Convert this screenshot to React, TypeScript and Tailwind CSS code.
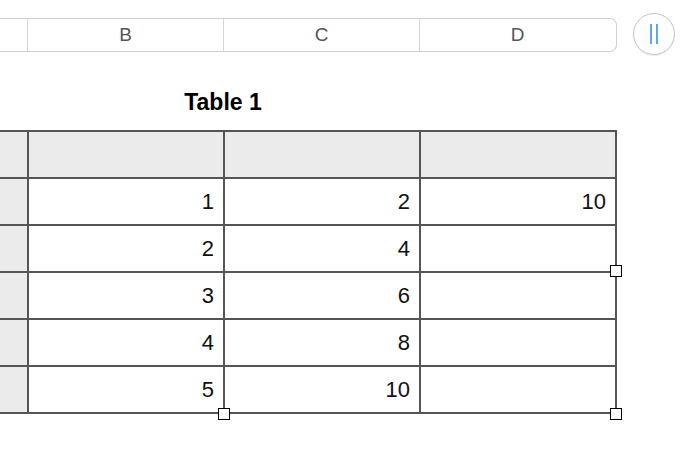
const rows: (string | number)[][] = [
  [1, 2, 10],
  [2, 4, ""],
  [3, 6, ""],
  [4, 8, ""],
  [5, 10, ""],
];

function Handle({ className }: { className: string }) {
  return <div className={`absolute w-[12px] h-[12px] bg-white border border-black ${className}`} />;
}

export default function App() {
  return (
    <div className="w-[684px] h-[456px] bg-white overflow-hidden relative" style={{ fontFamily: '"Liberation Sans", Arial, sans-serif' }}>
      {/* column header bar */}
      <div className="flex items-start">
        <div className="flex h-[34px] w-[617px] mt-[18px] border-y border-r border-[#d0d0d0] rounded-r-[7px] text-[19px] text-[#555] bg-white">
          <div className="w-[27px]" />
          {["B", "C", "D"].map((c) => (
            <div key={c} className="w-[196px] border-l border-[#d4d4d4] flex items-center justify-center">
              {c}
            </div>
          ))}
        </div>
        <div className="ml-[16px] mt-[13px] w-[42px] h-[42px] rounded-full border border-[#c4c4c4] shadow-[0_1px_1px_rgba(0,0,0,0.08)] flex items-center justify-center gap-[4px]">
          <div className="w-[2px] h-[20px] bg-[#5aa8f4]" />
          <div className="w-[2px] h-[20px] bg-[#5aa8f4]" />
        </div>
      </div>

      {/* title */}
      <div className="w-[446px] text-center mt-[33px] text-[23px] leading-[28px] font-bold text-black">Table 1</div>

      {/* table */}
      <div className="relative mt-[14px] w-[617px]">
        <div className="grid grid-cols-[27px_194px_194px_194px] gap-[2px] bg-[#555] pt-[2px] pr-[2px] pb-[2px]">
          <div className="h-[45px] bg-[#ebebeb]" />
          <div className="h-[45px] bg-[#ebebeb]" />
          <div className="h-[45px] bg-[#ebebeb]" />
          <div className="h-[45px] bg-[#ebebeb]" />
          {rows.map((r, i) => (
            <div key={i} className="contents">
              <div className="h-[45px] bg-[#ebebeb]" />
              {r.map((v, j) => (
                <div key={j} className="h-[45px] bg-white flex items-center justify-end pr-[9px] text-[22px] text-[#111]">
                  {v}
                </div>
              ))}
            </div>
          ))}
        </div>
        <Handle className="left-[218px] bottom-[-6px]" />
        <Handle className="left-[610px] bottom-[-6px]" />
        <Handle className="left-[610px] top-[135px]" />
      </div>
    </div>
  );
}
